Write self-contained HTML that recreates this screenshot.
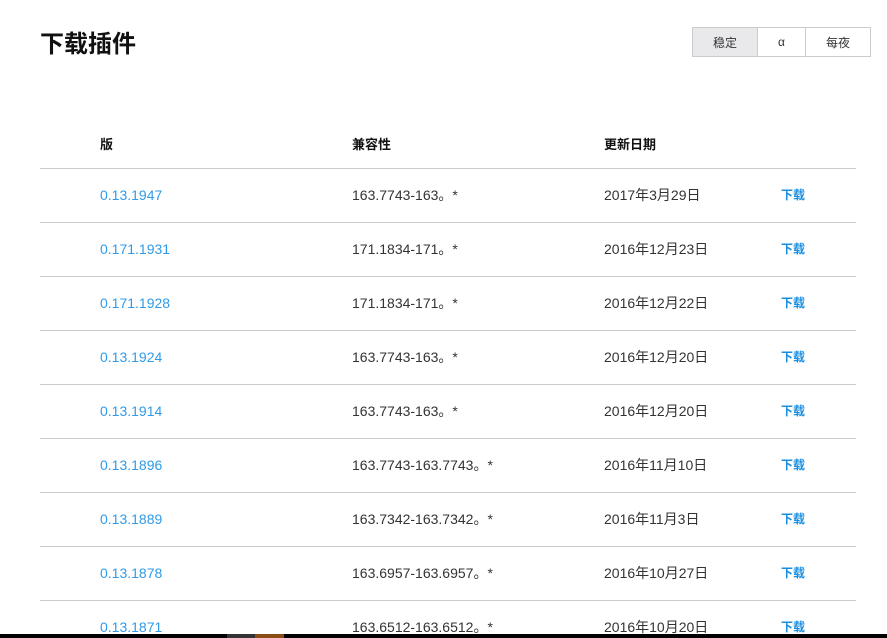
<!DOCTYPE html><html><head><meta charset="utf-8"><style>
body{margin:0;width:887px;height:638px;overflow:hidden;background:#fff;font-family:"Liberation Sans","Noto Sans CJK SC",sans-serif;color:#333;position:relative}
.a{position:absolute;white-space:nowrap}
h1{position:absolute;left:40px;top:24px;margin:0;font-size:24px;font-weight:bold;color:#111;font-family:"Noto Sans CJK SC",sans-serif}
.tabs{position:absolute;left:692px;top:27px;width:177px;height:28px;border:1px solid #ccc;display:flex;font-size:12px}
.tabs div{display:flex;align-items:center;justify-content:center;border-right:1px solid #ccc}
.tabs div:last-child{border:none}
.line{position:absolute;left:40px;width:816px;height:1px;background:#ccc}
.h{font-size:13px;font-weight:bold;color:#111;top:134px}
.r{font-size:14px;line-height:18px}
.v{color:#2f9be8}.d{color:#1a8fe0;font-size:12px;font-weight:bold}
</style></head><body>
<h1>下载插件</h1>
<div class="tabs"><div style="width:64px;background:#e9e9eb">稳定</div><div style="width:47px">α</div><div style="flex:1">每夜</div></div>
<div class="a h" style="left:100px">版</div><div class="a h" style="left:352px">兼容性</div><div class="a h" style="left:604px">更新日期</div>
<div id="rows"></div>
<div class="a" style="left:0;top:634px;width:887px;height:4px;background:#000"></div>
<div class="a" style="left:227px;top:634px;width:28px;height:4px;background:#333"></div>
<div class="a" style="left:255px;top:634px;width:29px;height:4px;background:#8a4d14"></div>
<script>
var d=[["0.13.1947","163.7743-163。*","2017年3月29日"],["0.171.1931","171.1834-171。*","2016年12月23日"],["0.171.1928","171.1834-171。*","2016年12月22日"],["0.13.1924","163.7743-163。*","2016年12月20日"],["0.13.1914","163.7743-163。*","2016年12月20日"],["0.13.1896","163.7743-163.7743。*","2016年11月10日"],["0.13.1889","163.7342-163.7342。*","2016年11月3日"],["0.13.1878","163.6957-163.6957。*","2016年10月27日"],["0.13.1871","163.6512-163.6512。*","2016年10月20日"]];
var h="";d.forEach(function(r,i){var y=168+54*i;h+='<div class="line" style="top:'+y+'px"></div>';var t=y+18;
h+='<div class="a r v" style="left:100px;top:'+t+'px">'+r[0]+'</div><div class="a r" style="left:352px;top:'+t+'px">'+r[1]+'</div><div class="a r" style="left:604px;top:'+t+'px">'+r[2]+'</div><div class="a r d" style="left:781px;top:'+t+'px">下载</div>';});
document.getElementById("rows").innerHTML=h;
</script>
</body></html>
